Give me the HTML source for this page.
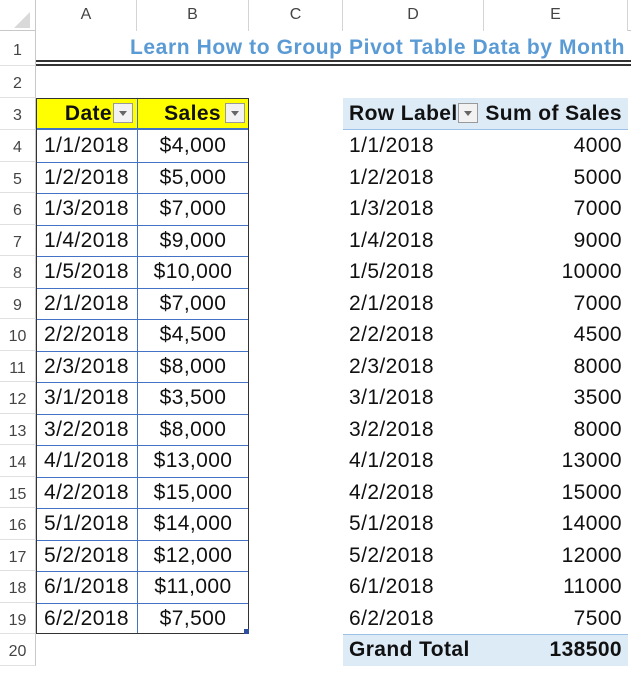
<!DOCTYPE html><html><head><style>
body{margin:0;width:631px;height:673px;background:#fff;position:relative;overflow:hidden;font-family:"Liberation Sans",sans-serif;color:#111}
div{position:absolute;box-sizing:border-box}
.hd{background:#fff;border-right:1px solid #d4d4d4;color:#444;font-size:16px;text-align:center;line-height:30px;top:0;height:31px}
.rn{left:0;width:36px;border-right:1px solid #c8c8c8;border-bottom:1px solid #e0e0e0;color:#444;font-size:16px;text-align:center;background:#fff}
.c{font-size:21px;white-space:nowrap;letter-spacing:0.4px}
.dd{width:20px;height:20px;border:1px solid #9a9a9a;background:#f2f2f2}
.dd:after{content:"";position:absolute;left:5px;top:7px;border-left:4px solid transparent;border-right:4px solid transparent;border-top:5px solid #666}
</style></head><body>
<div style="left:0;top:0;width:631px;height:31px;background:#fff;border-bottom:1px solid #c8c8c8"></div>
<div style="left:0;top:0;width:36px;height:31px;border-right:1px solid #c8c8c8"></div>
<div style="left:14px;top:12px;width:0;height:0;border-left:16px solid transparent;border-bottom:16px solid #d9d9d9"></div>
<div class="hd" style="left:36px;width:101px">A</div>
<div class="hd" style="left:137px;width:112px">B</div>
<div class="hd" style="left:249px;width:94px">C</div>
<div class="hd" style="left:343px;width:141px">D</div>
<div class="hd" style="left:484px;width:144px">E</div>
<div id="rows"></div>
<div style="left:36px;top:60px;width:595px;height:6px;border-top:2px solid #333;border-bottom:2px solid #333"></div>
<div class="c" style="left:36px;top:36px;width:589px;text-align:right;color:#5b9bd5;font-weight:bold;font-size:21px;letter-spacing:0.6px">Learn How to Group Pivot Table Data by Month</div>
<div style="left:36px;top:98px;width:213px;height:32px;background:#ffff00;border:1px solid #333;border-bottom:2px solid #4472c4"></div>
<div style="left:137px;top:98px;width:1px;height:536px;background:#4472c4"></div>
<div style="left:36px;top:98px;width:213px;height:536px;border:1px solid #333"></div>
<div class="c" style="left:36px;top:102px;width:76px;text-align:right;font-weight:bold">Date</div>
<div class="dd" style="left:113px;top:103px"></div>
<div class="c" style="left:137px;top:102px;width:84px;text-align:right;font-weight:bold">Sales</div>
<div class="dd" style="left:225px;top:103px"></div>
<div style="left:244px;top:629px;width:5px;height:5px;background:#2f4f9f"></div>
<div style="left:343px;top:98px;width:285px;height:32px;background:#ddebf7;border-bottom:1px solid #9bc2e6"></div>
<div class="c" style="left:349px;top:102px;font-weight:bold;width:108px;overflow:hidden">Row Labels</div>
<div class="dd" style="left:458px;top:103px"></div>
<div class="c" style="left:479px;top:102px;width:143px;text-align:right;font-weight:bold">Sum of Sales</div>
<div style="left:343px;top:634px;width:285px;height:32px;background:#ddebf7;border-top:1px solid #9bc2e6"></div>
<div class="c" style="left:349px;top:638px;font-weight:bold">Grand Total</div>
<div class="c" style="left:484px;top:638px;width:138px;text-align:right;font-weight:bold">138500</div>
<script>
var d=["1/1/2018","1/2/2018","1/3/2018","1/4/2018","1/5/2018","2/1/2018","2/2/2018","2/3/2018","3/1/2018","3/2/2018","4/1/2018","4/2/2018","5/1/2018","5/2/2018","6/1/2018","6/2/2018"];
var s=[4000,5000,7000,9000,10000,7000,4500,8000,3500,8000,13000,15000,14000,12000,11000,7500];
var tops=[31,66,98];for(var i=0;i<17;i++)tops.push(130+i*31.5);
var h="";
for(var r=1;r<=20;r++){var t=tops[r-1],b=(r<20?tops[r]:666);h+='<div class="rn" style="top:'+t+'px;height:'+(b-t)+'px;line-height:'+(b-t+4)+'px">'+r+'</div>';}
for(var i=0;i<16;i++){var t=130+i*31.5;
if(i>0)h+='<div style="left:36px;top:'+t+'px;width:213px;height:1px;background:#4472c4"></div>';
var f=s[i].toLocaleString("en-US");
h+='<div class="c" style="left:36px;top:'+(t+4)+'px;width:101px;text-align:center">'+d[i]+'</div>';
h+='<div class="c" style="left:137px;top:'+(t+4)+'px;width:112px;text-align:center">$'+f+'</div>';
h+='<div class="c" style="left:349px;top:'+(t+4)+'px">'+d[i]+'</div>';
h+='<div class="c" style="left:484px;top:'+(t+4)+'px;width:138px;text-align:right">'+s[i]+'</div>';}
document.getElementById("rows").outerHTML=h;
</script>
</body></html>
